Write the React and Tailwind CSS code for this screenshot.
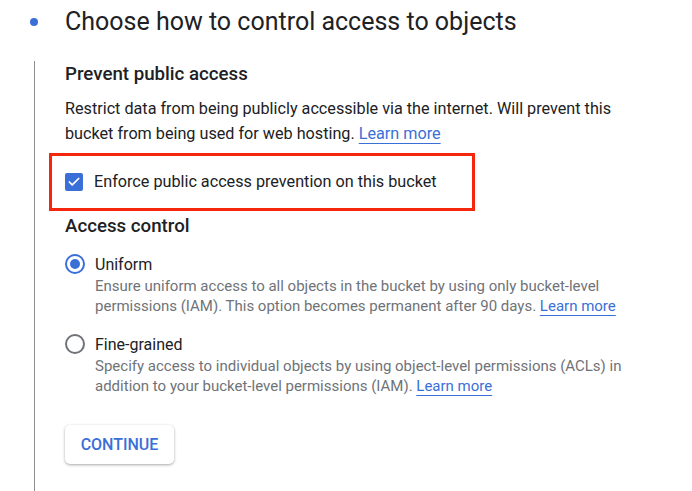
import { Check } from "lucide-react";

function LearnMore() {
  return (
    <a className="text-[#3a6fd8] underline decoration-1 underline-offset-[4px] cursor-pointer">
      Learn more
    </a>
  );
}

function Radio({ checked }) {
  return (
    <span
      className={
        "mt-[1px] flex h-[20px] w-[20px] shrink-0 items-center justify-center rounded-full border-2 " +
        (checked ? "border-[#3a6fd8]" : "border-[#6f7378]")
      }
    >
      {checked && <span className="h-[10px] w-[10px] rounded-full bg-[#3a6fd8]" />}
    </span>
  );
}

function Option({ checked, label, children }) {
  return (
    <div className="flex gap-[10px]">
      <Radio checked={checked} />
      <div>
        <div className="text-[16px] leading-[23px] text-[#202124]">{label}</div>
        <p className="text-[15px] leading-[20px] text-[#6f7378]">{children}</p>
      </div>
    </div>
  );
}

export default function App() {
  return (
    <div className="h-[491px] w-[692px] overflow-hidden bg-white font-['Roboto',sans-serif] text-[#202124]">
      <div className="flex items-center pt-[6px]">
        <div className="flex w-[65px] shrink-0 pl-[30px]">
          <span className="h-[8px] w-[8px] rounded-full bg-[#3a6fd8]" />
        </div>
        <h1 className="text-[25px] leading-[32px]">Choose how to control access to objects</h1>
      </div>

      <div className="ml-[34px] mt-[23px] h-[440px] border-l border-[#8e8e8e] pl-[30px]">
        <h2 className="pt-[1px] text-[18.7px] font-medium leading-[24px]">Prevent public access</h2>
        <p className="mt-[10px] text-[16.2px] leading-[25px]">
          Restrict data from being publicly accessible via the internet. Will prevent this
          <br />
          bucket from being used for web hosting. <LearnMore />
        </p>

        <div className="-ml-[16px] mt-[7px] flex h-[58px] w-[426px] items-center gap-[11px] border-[3px] border-[#f4260c] pl-[13px]">
          <span className="flex h-[18px] w-[18px] items-center justify-center rounded-[2px] bg-[#3a6fd8]">
            <Check className="h-[14px] w-[14px] text-white" strokeWidth={3} />
          </span>
          <span className="text-[16.2px]">Enforce public access prevention on this bucket</span>
        </div>

        <h2 className="mt-[3px] text-[18.7px] font-medium leading-[24px]">Access control</h2>

        <div className="mt-[15px] flex flex-col gap-[17px]">
          <Option checked label="Uniform">
            Ensure uniform access to all objects in the bucket by using only bucket-level
            <br />
            permissions (IAM). This option becomes permanent after 90 days. <LearnMore />
          </Option>
          <Option label="Fine-grained">
            Specify access to individual objects by using object-level permissions (ACLs) in
            <br />
            addition to your bucket-level permissions (IAM). <LearnMore />
          </Option>
        </div>

        <button className="mt-[29px] h-[39px] w-[109px] rounded-[5px] bg-white text-[16px] font-medium text-[#3a6fd8] shadow-[0_1px_3px_rgba(0,0,0,0.35)]">
          CONTINUE
        </button>
      </div>
    </div>
  );
}
